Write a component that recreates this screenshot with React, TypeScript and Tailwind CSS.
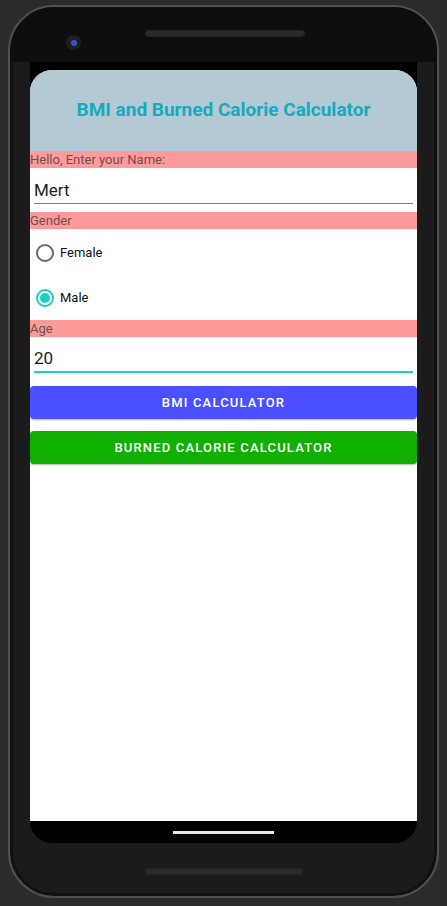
import { useState } from "react"

const font = { fontFamily: "Roboto, 'Noto Sans', sans-serif" }

function Label({ text }: { text: string }) {
  return (
    <div className="h-[17px] bg-[#ff9a9a] text-[13px] leading-[17px] text-[#6e4f4f]">{text}</div>
  )
}

function Radio({ label, checked, onClick }: { label: string; checked: boolean; onClick: () => void }) {
  return (
    <button type="button" onClick={onClick} className="flex h-[45px] w-full items-center pl-[6px] pt-[2px]">
      <span
        className={
          checked
            ? "flex h-[18px] w-[18px] items-center justify-center rounded-full border-2 border-[#18d0c2]"
            : "flex h-[18px] w-[18px] items-center justify-center rounded-full border-2 border-[#6b6b6b]"
        }
      >
        {checked ? <span className="h-[10px] w-[10px] rounded-full bg-[#18d0c2]" /> : null}
      </span>
      <span className="ml-[6px] text-[13px] text-[#111]">{label}</span>
    </button>
  )
}

export default function App() {
  const [gender, setGender] = useState("male")

  return (
    <div className="h-[906px] w-[447px] overflow-hidden bg-[#2b2a2d] px-[8px] pt-[5px]" style={font}>
      <div className="relative h-[893px] rounded-[46px] border-2 border-[#505052] bg-[#1b1b1b] shadow-[inset_0_0_0_3px_#111]">
        {/* top bezel */}
        <div className="relative h-[55px] rounded-t-[44px] bg-[#0e0e0e]">
          <div className="absolute left-[135px] top-[23px] h-[7px] w-[160px] rounded-full border border-[#222] bg-[#2c2a26]" />
          <div className="absolute left-[56px] top-[28px] flex h-[15px] w-[15px] items-center justify-center rounded-full bg-[#1e1e24]">
            <div className="h-[6px] w-[6px] rounded-full bg-[#3b55c9]" />
          </div>
        </div>

        {/* screen */}
        <div className="mx-[20px] flex h-[781px] flex-col rounded-b-[22px] bg-black pt-[8px]">
          <div className="flex h-[751px] flex-col overflow-hidden rounded-t-[22px] bg-white">
            <div className="flex h-[81px] items-center justify-center bg-[#b3c9d4]">
              <h1 className="text-[19px] font-bold text-[#17aabd]">BMI and Burned Calorie Calculator</h1>
            </div>

            <Label text="Hello, Enter your Name:" />
            <div className="flex h-[44px] flex-col justify-end px-[4px] pb-[8px]">
              <div className="text-[17px] leading-[22px] text-[#1e1e1e]">Mert</div>
              <div className="mt-[2px] h-px bg-[#7d7d7d]" />
            </div>

            <Label text="Gender" />
            <Radio label="Female" checked={gender === "female"} onClick={() => setGender("female")} />
            <Radio label="Male" checked={gender === "male"} onClick={() => setGender("male")} />

            <div className="mt-px" />
            <Label text="Age" />
            <div className="flex h-[36px] flex-col justify-end px-[4px]">
              <div className="text-[17px] leading-[22px] text-[#1e1e1e]">20</div>
              <div className="mt-[2px] h-[2px] bg-[#19d3c4]" />
            </div>

            <div className="mt-[13px] flex flex-col gap-[12px]">
              <button className="h-[33px] rounded-[4px] bg-[#4a50ff] text-[13px] font-medium tracking-[0.09em] text-white shadow-[0_1px_2px_rgba(0,0,0,0.3)]">
                BMI CALCULATOR
              </button>
              <button className="h-[33px] rounded-[4px] bg-[#12af03] text-[13px] font-medium tracking-[0.09em] text-white shadow-[0_1px_2px_rgba(0,0,0,0.3)]">
                BURNED CALORIE CALCULATOR
              </button>
            </div>
          </div>

          <div className="flex h-[22px] items-start justify-center pt-[10px]">
            <div className="h-[3px] w-[101px] bg-[#e6e6e6]" />
          </div>
        </div>

        {/* bottom speaker */}
        <div className="mx-auto mt-[25px] h-[7px] w-[158px] rounded-full border border-[#222] bg-[#2c2a26]" />
      </div>
    </div>
  )
}
